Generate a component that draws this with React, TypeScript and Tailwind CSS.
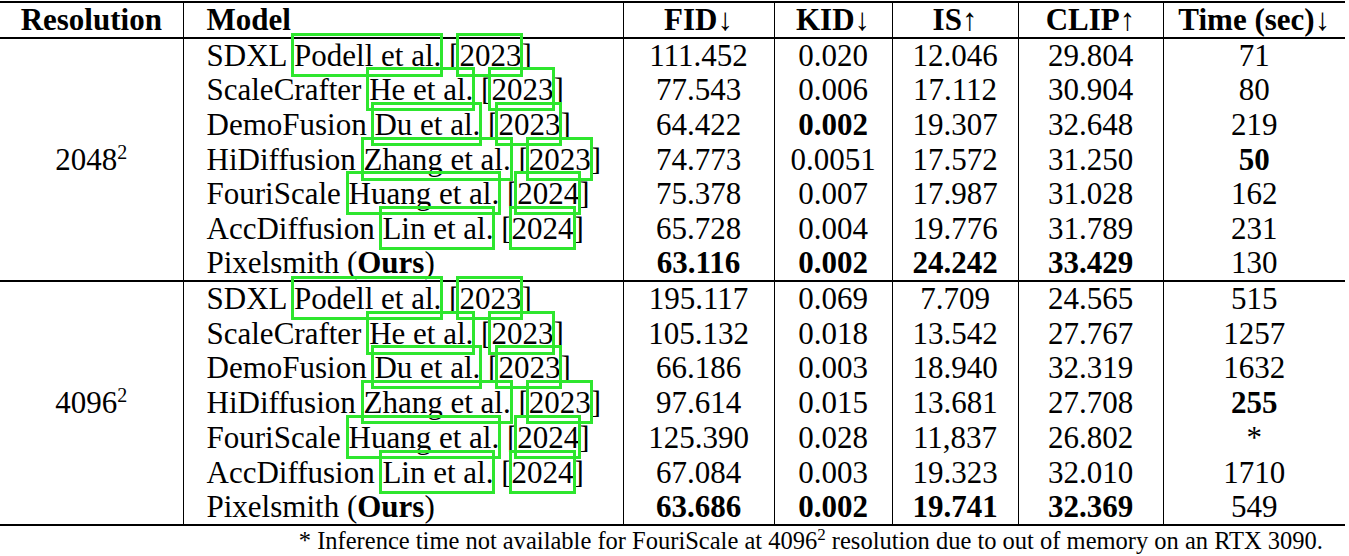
import React from "react";

type Row = {
  model: React.ReactNode;
  fid: string;
  kid: string;
  is: string;
  clip: string;
  time: string;
  bold?: string[];
};

function Cite({ children }: { children: React.ReactNode }) {
  return (
    <span className="relative">
      {children}
      <span className="pointer-events-none absolute -left-[3px] -right-[2px] -top-[5px] -bottom-[4px] border-[3px] border-[#2ee62e]" />
    </span>
  );
}

function Ref({ name, author, year }: { name: string; author: string; year: string }) {
  return (
    <>
      {name} <Cite>{author}</Cite> [<Cite>{year}</Cite>]
    </>
  );
}

const ours = (
  <>
    Pixelsmith (<b>Ours</b>)
  </>
);

const group1: Row[] = [
  { model: <Ref name="SDXL" author="Podell et al." year="2023" />, fid: "111.452", kid: "0.020", is: "12.046", clip: "29.804", time: "71" },
  { model: <Ref name="ScaleCrafter" author="He et al." year="2023" />, fid: "77.543", kid: "0.006", is: "17.112", clip: "30.904", time: "80" },
  { model: <Ref name="DemoFusion" author="Du et al." year="2023" />, fid: "64.422", kid: "0.002", is: "19.307", clip: "32.648", time: "219", bold: ["kid"] },
  { model: <Ref name="HiDiffusion" author="Zhang et al." year="2023" />, fid: "74.773", kid: "0.0051", is: "17.572", clip: "31.250", time: "50", bold: ["time"] },
  { model: <Ref name="FouriScale" author="Huang et al." year="2024" />, fid: "75.378", kid: "0.007", is: "17.987", clip: "31.028", time: "162" },
  { model: <Ref name="AccDiffusion" author="Lin et al." year="2024" />, fid: "65.728", kid: "0.004", is: "19.776", clip: "31.789", time: "231" },
  { model: ours, fid: "63.116", kid: "0.002", is: "24.242", clip: "33.429", time: "130", bold: ["fid", "kid", "is", "clip"] },
];

const group2: Row[] = [
  { model: <Ref name="SDXL" author="Podell et al." year="2023" />, fid: "195.117", kid: "0.069", is: "7.709", clip: "24.565", time: "515" },
  { model: <Ref name="ScaleCrafter" author="He et al." year="2023" />, fid: "105.132", kid: "0.018", is: "13.542", clip: "27.767", time: "1257" },
  { model: <Ref name="DemoFusion" author="Du et al." year="2023" />, fid: "66.186", kid: "0.003", is: "18.940", clip: "32.319", time: "1632" },
  { model: <Ref name="HiDiffusion" author="Zhang et al." year="2023" />, fid: "97.614", kid: "0.015", is: "13.681", clip: "27.708", time: "255", bold: ["time"] },
  { model: <Ref name="FouriScale" author="Huang et al." year="2024" />, fid: "125.390", kid: "0.028", is: "11,837", clip: "26.802", time: "*" },
  { model: <Ref name="AccDiffusion" author="Lin et al." year="2024" />, fid: "67.084", kid: "0.003", is: "19.323", clip: "32.010", time: "1710" },
  { model: ours, fid: "63.686", kid: "0.002", is: "19.741", clip: "32.369", time: "549", bold: ["fid", "kid", "is", "clip"] },
];

function Group({ res, rows }: { res: string; rows: Row[] }) {
  return (
    <>
      {rows.map((r, i) => {
        const b = (k: string) => (r.bold?.includes(k) ? "font-bold" : "");
        const bottom = i === rows.length - 1 ? "border-b-2 border-b-black" : "";
        return (
          <tr key={i} className={`h-[34.7px] ${bottom}`}>
            {i === 0 && (
              <td rowSpan={rows.length} className="border-r border-black text-center align-middle">
                {res}
                <sup className="text-[20px] -top-[11px]">2</sup>
              </td>
            )}
            <td className="border-r border-black pl-[23px] whitespace-nowrap">{r.model}</td>
            <td className={`border-r border-black text-center ${b("fid")}`}>{r.fid}</td>
            <td className={`border-r border-black text-center ${b("kid")}`}>{r.kid}</td>
            <td className={`border-r border-black text-center ${b("is")}`}>{r.is}</td>
            <td className={`border-r border-black text-center ${b("clip")}`}>{r.clip}</td>
            <td className={`text-center ${b("time")}`}>{r.time}</td>
          </tr>
        );
      })}
    </>
  );
}

export default function App() {
  return (
    <div className="w-[1349px] h-[556px] overflow-hidden bg-white pt-[1px] text-black font-['Liberation_Serif',serif] text-[31px] leading-[34px]">
      <table className="w-[1345px] table-fixed border-collapse">
        <colgroup>
          <col className="w-[183px]" />
          <col className="w-[440px]" />
          <col className="w-[151px]" />
          <col className="w-[118px]" />
          <col className="w-[126px]" />
          <col className="w-[145px]" />
          <col className="w-[182px]" />
        </colgroup>
        <thead>
          <tr className="h-[34px] border-y-2 border-black font-bold">
            <th className="border-r border-black text-center">Resolution</th>
            <th className="border-r border-black pl-[23px] text-left">Model</th>
            <th className="border-r border-black text-center">
              FID<span className="font-normal">↓</span>
            </th>
            <th className="border-r border-black text-center">
              KID<span className="font-normal">↓</span>
            </th>
            <th className="border-r border-black text-center">
              IS<span className="font-normal">↑</span>
            </th>
            <th className="border-r border-black text-center">
              CLIP<span className="font-normal">↑</span>
            </th>
            <th className="text-center">
              Time (sec)<span className="font-normal">↓</span>
            </th>
          </tr>
        </thead>
        <tbody>
          <Group res="2048" rows={group1} />
          <Group res="4096" rows={group2} />
        </tbody>
      </table>
      <p className="mt-[1px] pr-[26px] text-right text-[24.5px] leading-[28px]">
        * Inference time not available for FouriScale at 4096
        <sup className="text-[17px] -top-[9px]">2</sup> resolution due to out of memory on an RTX 3090.
      </p>
    </div>
  );
}
